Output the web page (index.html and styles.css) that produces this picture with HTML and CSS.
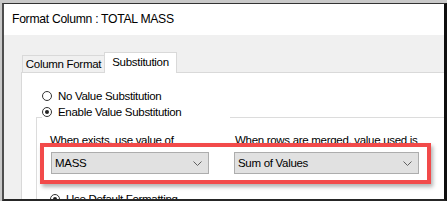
FILE: index.html
```html
<!DOCTYPE html>
<html lang="en">
<head>
    <meta charset="UTF-8">
    <title>Format Column</title>
    <link rel="stylesheet" href="styles.css">
</head>
<body>

<div class="window">
    <div class="titlebar">Format Column : TOTAL MASS</div>

    <div class="tabs">
        <div class="tab">Column Format</div>
        <div class="tab active">Substitution</div>
    </div>

    <div class="page">
        <div class="panel">
            <label class="radio"><span class="dot"></span>No Value Substitution</label>

            <div class="group-head">
                <span class="rule short"></span>
                <label class="radio checked"><span class="dot"></span>Enable Value Substitution</label>
                <span class="rule"></span>
            </div>

            <div class="group">
                <div class="fields">
                    <div class="field">
                        <div class="caption">When exists, use value of</div>
                        <div class="select first">
                            <span>MASS</span>
                            <svg width="9" height="5" viewBox="0 0 9 5"><polyline points="0.5,0.5 4.5,4.5 8.5,0.5" fill="none" stroke="#606060" stroke-width="1"/></svg>
                        </div>
                    </div>
                    <div class="field">
                        <div class="caption">When rows are merged, value used is</div>
                        <div class="select second">
                            <span>Sum of Values</span>
                            <svg width="9" height="5" viewBox="0 0 9 5"><polyline points="0.5,0.5 4.5,4.5 8.5,0.5" fill="none" stroke="#606060" stroke-width="1"/></svg>
                        </div>
                    </div>
                </div>

                <label class="radio checked bottom"><span class="dot"></span>Use Default Formatting</label>

                <!-- callout drawn over the two dropdowns -->
                <div class="highlight"></div>
            </div>
        </div>
    </div>
</div>

</body>
</html>
```

FILE: styles.css
```css
html, body {
    margin: 0;
    width: 447px;
    height: 201px;
    overflow: hidden;
}
body {
    box-sizing: border-box;
    padding: 3px 0 0 2px;
    background-color: #c9c9c9;
    font-family: "Liberation Sans", Arial, sans-serif;
    font-size: 11.5px;
    letter-spacing: -0.3px;
    color: #000;
}
.window {
    box-sizing: border-box;
    height: 198px;
    border-top: 1px solid #333;
    border-left: 2px solid #4e4e4e;
    border-right: 3px solid #0f0f0f;
    border-bottom: 2px solid #262626;
    overflow: hidden;
    background-color: #fff;
}
.titlebar {
    height: 31px;
    line-height: 31px;
    padding-left: 8px;
    font-size: 12.2px;
    background-color: #fff;
}
.tabs {
    display: flex;
    align-items: flex-end;
    height: 37px;
    padding-left: 18px;
    background-color: #f0f0f0;
}
.tab {
    box-sizing: border-box;
    width: 82px;
    height: 17px;
    line-height: 16px;
    text-align: center;
    white-space: nowrap;
    border: 1px solid #d9d9d9;
    border-right: none;
    border-bottom: none;
    background-color: #f0f0f0;
}
.tab.active {
    position: relative;
    z-index: 1;
    width: 73px;
    height: 21px;
    line-height: 18px;
    margin-bottom: -1px;
    border-right: 1px solid #d9d9d9;
    background-color: #fff;
}
.page {
    height: 200px;
    padding-left: 17px;
    background-color: #f0f0f0;
}
.panel {
    height: 100%;
    padding-top: 15px;
    border-top: 1px solid #d9d9d9;
    border-left: 1px solid #d9d9d9;
    background-color: #fff;
}
.radio {
    display: flex;
    align-items: center;
    height: 16px;
    margin-left: 20px;
    white-space: nowrap;
}
.dot {
    box-sizing: border-box;
    width: 10px;
    height: 10px;
    margin-right: 6px;
    border: 1px solid #333;
    border-radius: 50%;
    background-color: #fff;
    display: flex;
    align-items: center;
    justify-content: center;
}
.radio.checked .dot::after {
    content: "";
    width: 4px;
    height: 4px;
    border-radius: 50%;
    background-color: #222;
}
.group-head {
    display: flex;
    height: 16px;
    margin-left: 14px;
}
.group-head .radio {
    width: 188px;
    margin-left: 0;
}
.rule {
    flex: 1;
    align-self: flex-start;
    margin-top: 13px;
    border-top: 1px solid #dcdcdc;
}
.rule.short {
    flex: none;
    width: 6px;
}
.group {
    position: relative;
    margin: -3px 0 0 14px;
    padding: 16px 0 0 13px;
    border-left: 1px solid #dcdcdc;
    height: 120px;
}
.fields {
    display: flex;
    gap: 25px;
}
.caption {
    line-height: 15px;
    margin-bottom: 4px;
    white-space: nowrap;
}
.field:last-child .caption {
    padding-left: 1px;
}
.select {
    box-sizing: border-box;
    display: flex;
    align-items: center;
    justify-content: space-between;
    height: 22px;
    padding: 0 6px 0 3px;
    border: 1px solid #adadad;
    background-color: #e1e1e1;
}
.select.first {
    width: 158px;
    margin-left: 1px;
}
.select.second {
    width: 185px;
}
.radio.bottom {
    margin: 17px 0 0 0;
}
.highlight {
    position: absolute;
    left: 3px;
    top: 26px;
    width: 391px;
    height: 41px;
    box-sizing: border-box;
    border: 4px solid #f24a4a;
    box-shadow: 2px 3px 4px rgba(0, 0, 0, 0.3);
}
```
